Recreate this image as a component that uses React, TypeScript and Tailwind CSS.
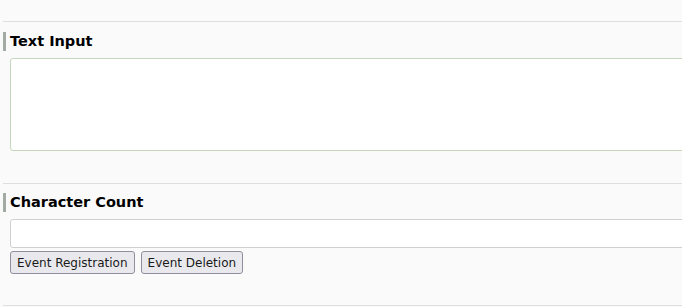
import React from "react";

export default function App() {
  return (
    <div className="w-[682px] h-[307px] overflow-hidden bg-[#fafafa] font-['DejaVu_Sans',sans-serif] text-black">
      <div className="pt-[21px] pl-[3px]">
        <div className="border-t border-[#dedede] pt-[10px] h-[162px]">
          <div className="border-l-[3px] border-[#a3aaa3] h-[19px] pl-[4px] flex items-center text-[14.5px] font-bold leading-none">
            Text Input
          </div>
          <div className="pl-[7px] mt-[7px]">
            <textarea className="block w-[700px] h-[93px] bg-white border border-[#c4d6bb] rounded-[3px] resize-none outline-none" />
          </div>
        </div>
        <div className="border-t border-[#dedede] pt-[9px] h-[122px]">
          <div className="border-l-[3px] border-[#a3aaa3] h-[19px] pl-[4px] flex items-center text-[14.5px] font-bold leading-none">
            Character Count
          </div>
          <div className="pl-[7px] mt-[7px]">
            <input className="block w-[700px] h-[29px] bg-white border border-[#d0d0d0] rounded-[3px] outline-none" />
            <div className="flex gap-[6px] mt-[3px]">
              <button className="h-[23px] px-[6px] bg-[#e9e9ed] border border-[#8f8f9d] rounded-[3px] text-[12px] font-['DejaVu_Sans',sans-serif] text-[#1a1a1a] leading-none">
                Event Registration
              </button>
              <button className="h-[23px] px-[6px] bg-[#e9e9ed] border border-[#8f8f9d] rounded-[3px] text-[12px] font-['DejaVu_Sans',sans-serif] text-[#1a1a1a] leading-none">
                Event Deletion
              </button>
            </div>
          </div>
        </div>
        <div className="border-t border-[#dedede]" />
      </div>
    </div>
  );
}
